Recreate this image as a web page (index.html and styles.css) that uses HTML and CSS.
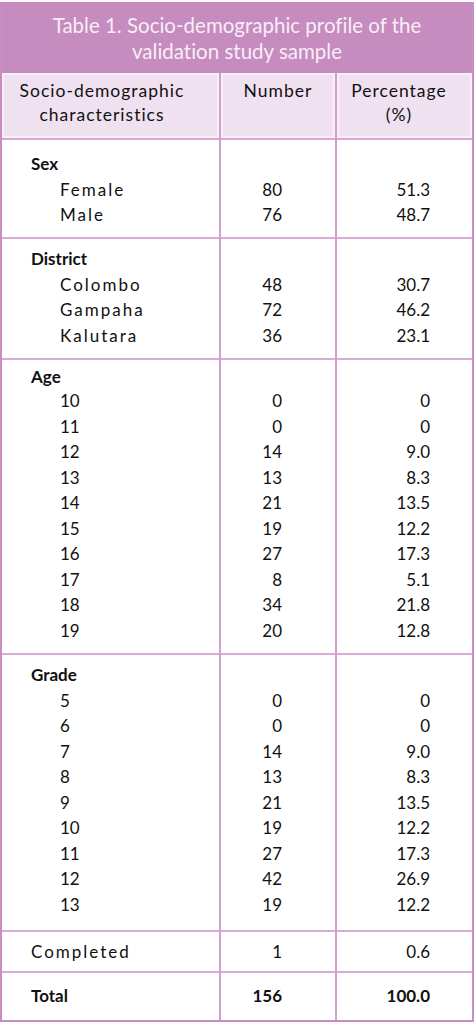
FILE: index.html
```html
<!DOCTYPE html>
<html>
<head>
<meta charset="utf-8">
<link rel="stylesheet" href="styles.css">
</head>
<body>
<div class="frame">
  <div class="title">Table 1. Socio-demographic profile of the<br>validation study sample</div>
  <table class="tbl">
    <colgroup><col class="c1"><col class="c2"><col class="c3"></colgroup>
    <thead>
      <tr>
        <th class="h1">Socio-demographic<br>characteristics</th>
        <th class="h2">Number</th>
        <th class="h3">Percentage<br>(%)</th>
      </tr>
    </thead>
    <tbody>
      <tr class="sec s-sex">
        <td><div class="cat">Sex</div><div class="item sp">Female</div><div class="item sp">Male</div></td>
        <td class="num"><div>&nbsp;</div><div>80</div><div>76</div></td>
        <td class="pct"><div>&nbsp;</div><div>51.3</div><div>48.7</div></td>
      </tr>
      <tr class="sec s-dist">
        <td><div class="cat">District</div><div class="item sp">Colombo</div><div class="item sp">Gampaha</div><div class="item sp">Kalutara</div></td>
        <td class="num"><div>&nbsp;</div><div>48</div><div>72</div><div>36</div></td>
        <td class="pct"><div>&nbsp;</div><div>30.7</div><div>46.2</div><div>23.1</div></td>
      </tr>
      <tr class="sec s-age">
        <td><div class="cat first">Age</div><div class="item">10</div><div class="item">11</div><div class="item">12</div><div class="item">13</div><div class="item">14</div><div class="item">15</div><div class="item">16</div><div class="item">17</div><div class="item">18</div><div class="item">19</div></td>
        <td class="num"><div class="first">&nbsp;</div><div>0</div><div>0</div><div>14</div><div>13</div><div>21</div><div>19</div><div>27</div><div>8</div><div>34</div><div>20</div></td>
        <td class="pct"><div class="first">&nbsp;</div><div>0</div><div>0</div><div>9.0</div><div>8.3</div><div>13.5</div><div>12.2</div><div>17.3</div><div>5.1</div><div>21.8</div><div>12.8</div></td>
      </tr>
      <tr class="sec s-grade">
        <td><div class="cat">Grade</div><div class="item">5</div><div class="item">6</div><div class="item">7</div><div class="item">8</div><div class="item">9</div><div class="item">10</div><div class="item">11</div><div class="item">12</div><div class="item">13</div></td>
        <td class="num"><div>&nbsp;</div><div>0</div><div>0</div><div>14</div><div>13</div><div>21</div><div>19</div><div>27</div><div>42</div><div>19</div></td>
        <td class="pct"><div>&nbsp;</div><div>0</div><div>0</div><div>9.0</div><div>8.3</div><div>13.5</div><div>12.2</div><div>17.3</div><div>26.9</div><div>12.2</div></td>
      </tr>
      <tr class="sec s-comp">
        <td><div class="cat plain sp">Completed</div></td>
        <td class="num"><div>1</div></td>
        <td class="pct"><div>0.6</div></td>
      </tr>
      <tr class="sec s-total">
        <td><div class="cat">Total</div></td>
        <td class="num bold"><div>156</div></td>
        <td class="pct bold"><div>100.0</div></td>
      </tr>
    </tbody>
  </table>
</div>
</body>
</html>
```
FILE: styles.css
```css
html, body {
  margin: 0;
  padding: 0;
  background: #ffffff;
}
body {
  font-family: Lato, "Open Sans", "Liberation Sans", sans-serif;
  font-variant-ligatures: none;
  color: #111111;
}
.frame {
  width: 470px;
  margin-top: 2px;
  border-left: 2px solid #c98cc3;
  border-right: 2px solid #c98cc3;
  border-bottom: 2px solid #c98cc3;
}
.title {
  background: #c68bbf;
  color: #f8eef7;
  text-align: center;
  font-size: 20.5px;
  line-height: 26px;
  height: 71px;
  box-sizing: border-box;
  padding-top: 10px;
}
.tbl {
  width: 100%;
  border-collapse: collapse;
  table-layout: fixed;
}
.c1 { width: 218px; }
.c2 { width: 116px; }
.c3 { width: 136px; }
thead th {
  background: #f0e1f0;
  font-weight: normal;
  font-size: 17.5px;
  line-height: 24px;
  height: 66px;
  box-sizing: border-box;
  vertical-align: top;
  padding-top: 6px;
  text-align: center;
  box-shadow: inset 0 0 0 2px #f7eef7;
  letter-spacing: 1px;
}
th.h1 { padding-right: 18px; }
th.h3 { padding-right: 12px; }
.tbl th + th, .tbl td + td {
  border-left: 2px solid #d29ecd;
}
.tbl tbody tr {
  border-top: 2px solid #d9abd4;
}
td {
  vertical-align: top;
  font-size: 17px;
  line-height: 25.5px;
  padding: 0;
}
.cat {
  font-weight: bold;
  padding-left: 29px;
}
.cat.plain { font-weight: normal; }
.first { line-height: 23px; }
.item { padding-left: 58px; }
.sp { letter-spacing: 2px; }
.num { text-align: right; padding-right: 53px; }
.pct { text-align: right; padding-right: 42px; }
.bold { font-weight: bold; }
.s-sex td { padding-top: 11px; height: 99px; box-sizing: border-box; }
.s-dist td { padding-top: 7px; height: 121px; box-sizing: border-box; }
.s-age td { padding-top: 5px; height: 295px; box-sizing: border-box; }
.s-grade td { padding-top: 7px; height: 277px; box-sizing: border-box; }
.s-comp td { padding-top: 7px; height: 41px; box-sizing: border-box; }
.s-total td { padding-top: 10px; height: 48px; box-sizing: border-box; }
```
